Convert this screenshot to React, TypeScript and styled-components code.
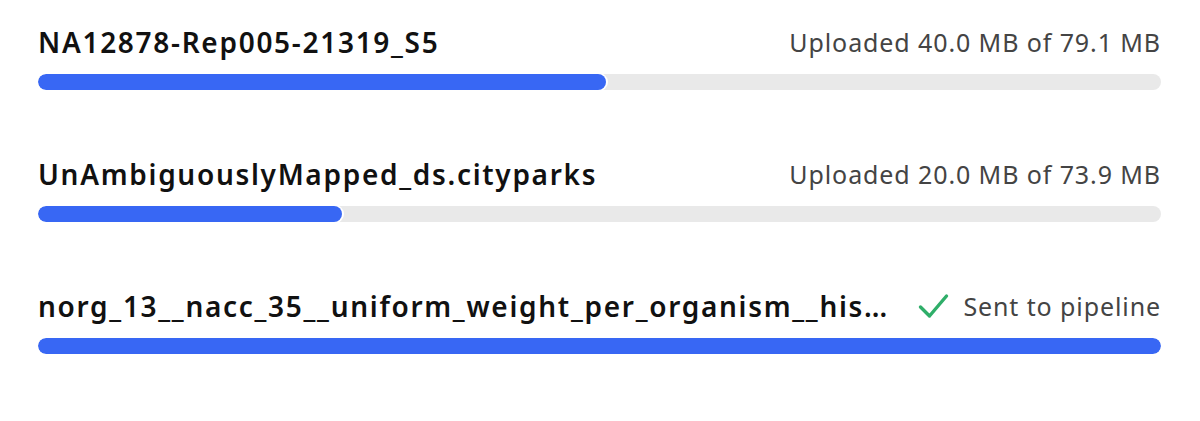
import React from "react";
import styled, { createGlobalStyle } from "styled-components";

const Global = createGlobalStyle`
  html, body { margin: 0; padding: 0; background: #ffffff; }
  body { font-family: "Noto Sans", "Open Sans", sans-serif; }
`;

const List = styled.div`
  display: flex;
  flex-direction: column;
  gap: 67px;
  padding: 25px 39px 0 38px;
`;

const Row = styled.div`
  display: flex;
  flex-direction: column;
  gap: 15px;
`;

const Header = styled.div`
  display: flex;
  align-items: center;
  justify-content: space-between;
  gap: 22px;
  height: 34px;
`;

const Name = styled.div`
  flex: 1 1 auto;
  min-width: 0;
  font-size: 28px;
  font-weight: 600;
  letter-spacing: 1.7px;
  color: #111111;
  white-space: nowrap;
  overflow: hidden;
  text-overflow: ellipsis;
`;

const Status = styled.div`
  flex: 0 0 auto;
  display: flex;
  align-items: center;
  gap: 14px;
  font-size: 25px;
  letter-spacing: 0.9px;
  color: #444444;
  white-space: nowrap;
`;

const Track = styled.div`
  height: 16px;
  border-radius: 8px;
  background: #e9e9e9;
  overflow: hidden;
`;

const Fill = styled.div`
  height: 100%;
  border-radius: 8px;
  background: #3867f4;
  box-shadow: 1px 0 0 1px #ffffff;
`;

const Check = () => (
  <svg width="31" height="28" viewBox="0 0 31 28" fill="none">
    <path
      d="M2.5 15 L11.5 24 L28.5 4"
      stroke="#2fae69"
      strokeWidth="3.4"
      strokeLinecap="round"
      strokeLinejoin="round"
    />
  </svg>
);

type Item = { name: string; done: number; total: number; sent?: boolean };

const items: Item[] = [
  { name: "NA12878-Rep005-21319_S5", done: 40.0, total: 79.1 },
  { name: "UnAmbiguouslyMapped_ds.cityparks", done: 20.0, total: 73.9 },
  {
    name: "norg_13__nacc_35__uniform_weight_per_organism__hiseq_reads_v2.fastq",
    done: 1,
    total: 1,
    sent: true,
  },
];

export default function App() {
  return (
    <>
      <Global />
      <List>
        {items.map((it) => (
          <Row key={it.name}>
            <Header>
              <Name>{it.name}</Name>
              <Status>
                {it.sent ? (
                  <>
                    <Check />
                    Sent to pipeline
                  </>
                ) : (
                  `Uploaded ${it.done.toFixed(1)} MB of ${it.total.toFixed(1)} MB`
                )}
              </Status>
            </Header>
            <Track>
              <Fill
                style={{ width: `${(it.done / it.total) * 100}%` }}
              />
            </Track>
          </Row>
        ))}
      </List>
    </>
  );
}
